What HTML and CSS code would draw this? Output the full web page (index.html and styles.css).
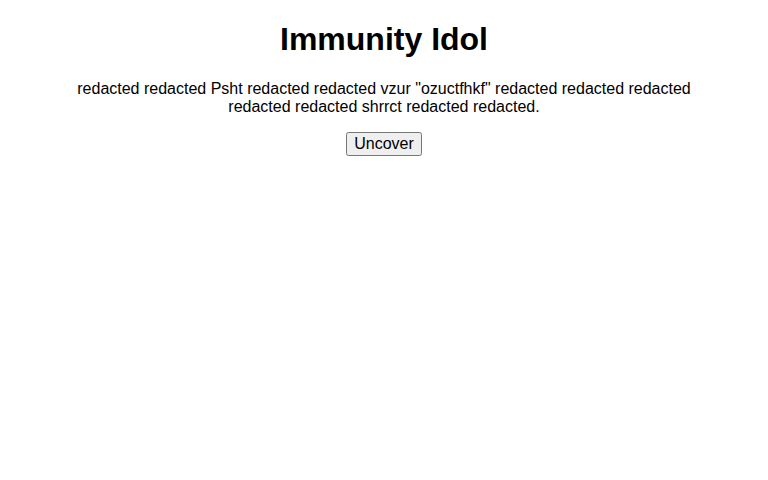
FILE: index.html
```html
<!DOCTYPE html>
<html>
<head>
<meta charset="utf-8">
<link rel="stylesheet" href="styles.css">
</head>
<body>
<main class="page">
  <h1 class="title">Immunity Idol</h1>
  <p class="desc">redacted redacted Psht redacted redacted vzur "ozuctfhkf" redacted redacted redacted redacted redacted shrrct redacted redacted.</p>
  <button class="btn" type="button">Uncover</button>
</main>
</body>
</html>
```
FILE: styles.css
```css
html, body {
  margin: 0;
  padding: 0;
  background: #ffffff;
}
body {
  font-family: "Liberation Sans", Arial, sans-serif;
  font-size: 16px;
  color: #000;
}
.page {
  max-width: 640px;
  margin: 0 auto;
  text-align: center;
}
.title {
  font-size: 32px;
  font-weight: bold;
  margin: 21.44px 0;
}
.desc {
  margin: 16px 0;
}
.btn {
  font-family: "Liberation Sans", Arial, sans-serif;
  font-size: 16px;
}
```
